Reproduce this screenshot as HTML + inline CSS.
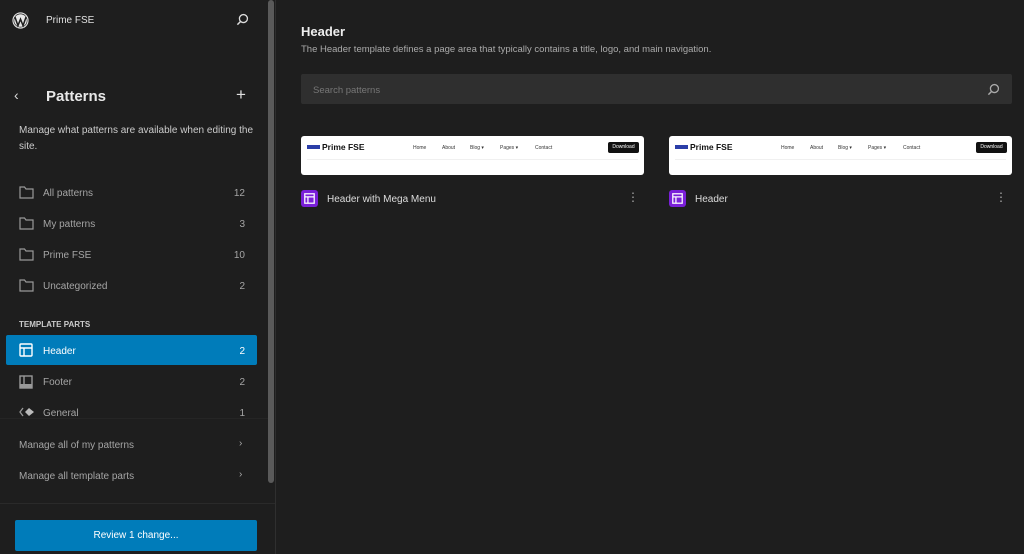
<!DOCTYPE html>
<html><head><meta charset="utf-8">
<style>
*{box-sizing:border-box;margin:0;padding:0}
body{width:1024px;height:554px;overflow:hidden;background:#1e1e1e;font-family:"Liberation Sans",sans-serif;color:#e0e0e0;position:relative}
.abs{position:absolute}
.side{left:0;top:0;width:268px;height:554px;background:#1e1e1e}
.scroll{left:268px;top:0;width:6px;height:483px;background:#5a5a5a;border-radius:3px}
.divider{left:275px;top:0;width:1px;height:554px;background:#2f2f2f}
.t{position:absolute;white-space:nowrap}
.item{position:absolute;left:6px;width:251px;height:30px;font-size:10px;color:#a5a5a5}
.item .lbl{position:absolute;left:37px;top:10px}
.item .cnt{position:absolute;right:12px;top:10px}
.item svg{position:absolute;left:13px;top:8px}
.card{position:absolute;top:136px;width:343px;height:39px;background:#fff;border-radius:3px}
.nav{position:absolute;top:9px;font-size:5px;color:#333}
</style></head><body>
<div class="abs side"></div>
<div class="abs scroll"></div>
<div class="abs divider"></div>

<svg class="abs" style="left:12px;top:12px" width="17" height="17" viewBox="0 0 20 20"><circle cx="10" cy="10" r="9.5" fill="#e8e8e8"/><circle cx="10" cy="10" r="8.2" fill="#1e1e1e"/><circle cx="10" cy="10" r="7.4" fill="#e8e8e8"/><path d="M3.5 6 L7 16 L10 8.5 L13 16 L16.5 6" stroke="#1e1e1e" stroke-width="1.8" fill="none"/></svg>
<div class="t" style="left:46px;top:15px;font-size:10px;color:#e0e0e0">Prime FSE</div>
<svg class="abs" style="left:236px;top:13px" width="13" height="13" viewBox="0 0 14 14"><circle cx="8" cy="6" r="4.3" stroke="#ddd" stroke-width="1.4" fill="none"/><path d="M5 9 L1.5 12.5" stroke="#ddd" stroke-width="1.6"/></svg>

<div class="t" style="left:14px;top:87px;font-size:14px;color:#ddd">‹</div>
<div class="t" style="left:46px;top:88px;font-size:15px;font-weight:bold;color:#e8e8e8">Patterns</div>
<div class="t" style="left:236px;top:85px;font-size:17px;color:#e0e0e0">+</div>
<div class="t" style="left:19px;top:123px;font-size:10px;line-height:15.5px;color:#ccc;white-space:normal;width:240px">Manage what patterns are available when editing the site.</div>

<div class="item" style="top:178px"><svg width="15" height="13" viewBox="0 0 15 13"><path d="M1 1h4.5l1.5 2h7v9h-13z" stroke="#999" stroke-width="1.2" fill="none"/></svg><span class="lbl">All patterns</span><span class="cnt">12</span></div>
<div class="item" style="top:209px"><svg width="15" height="13" viewBox="0 0 15 13"><path d="M1 1h4.5l1.5 2h7v9h-13z" stroke="#999" stroke-width="1.2" fill="none"/></svg><span class="lbl">My patterns</span><span class="cnt">3</span></div>
<div class="item" style="top:240px"><svg width="15" height="13" viewBox="0 0 15 13"><path d="M1 1h4.5l1.5 2h7v9h-13z" stroke="#999" stroke-width="1.2" fill="none"/></svg><span class="lbl">Prime FSE</span><span class="cnt">10</span></div>
<div class="item" style="top:271px"><svg width="15" height="13" viewBox="0 0 15 13"><path d="M1 1h4.5l1.5 2h7v9h-13z" stroke="#999" stroke-width="1.2" fill="none"/></svg><span class="lbl">Uncategorized</span><span class="cnt">2</span></div>

<div class="t" style="left:19px;top:320px;font-size:8px;font-weight:bold;color:#ccc">TEMPLATE PARTS</div>
<div class="item" style="top:335px;background:#007cba;color:#fff;border-radius:2px"><svg width="14" height="14" viewBox="0 0 14 14"><rect x="1" y="1" width="12" height="12" rx="1" stroke="#fff" stroke-width="1.4" fill="none"/><path d="M1 5h12M5 5v8" stroke="#fff" stroke-width="1.4"/></svg><span class="lbl" style="top:11px">Header</span><span class="cnt" style="top:11px">2</span></div>
<div class="item" style="top:367px"><svg width="14" height="14" viewBox="0 0 14 14"><rect x="1" y="1" width="12" height="12" stroke="#999" stroke-width="1.4" fill="none"/><rect x="1" y="9" width="12" height="4" fill="#999"/><path d="M5 1v8" stroke="#999" stroke-width="1.4"/></svg><span class="lbl">Footer</span><span class="cnt">2</span></div>
<div class="item" style="top:398px;height:20px;overflow:hidden"><svg width="16" height="12" viewBox="0 0 16 12"><path d="M4 2 L1 6 L4 10" stroke="#999" stroke-width="1.3" fill="none"/><path d="M6 6 L10 2 L15 6 L10 10z" fill="#bbb"/></svg><span class="lbl">General</span><span class="cnt">1</span></div>
<div class="abs" style="left:0;top:418px;width:268px;height:1px;background:#252525"></div>

<div class="t" style="left:19px;top:440px;font-size:10px;color:#a5a5a5">Manage all of my patterns</div>
<div class="t" style="left:239px;top:438px;font-size:10px;color:#aaa">›</div>
<div class="t" style="left:19px;top:471px;font-size:10px;color:#a5a5a5">Manage all template parts</div>
<div class="t" style="left:239px;top:469px;font-size:10px;color:#aaa">›</div>
<div class="abs" style="left:0;top:503px;width:275px;height:1px;background:#2a2a2a"></div>
<div class="abs" style="left:15px;top:520px;width:242px;height:31px;background:#007cba;border-radius:2px;color:#fff;font-size:10px;text-align:center;line-height:31px">Review 1 change...</div>

<div class="t" style="left:301px;top:24px;font-size:13px;font-weight:bold;color:#eee">Header</div>
<div class="t" style="left:301px;top:44px;font-size:9.5px;color:#aaa">The Header template defines a page area that typically contains a title, logo, and main navigation.</div>
<div class="abs" style="left:301px;top:74px;width:711px;height:30px;background:#2f2f2f;border-radius:2px"></div>
<div class="t" style="left:313px;top:85px;font-size:9.5px;color:#777">Search patterns</div>
<svg class="abs" style="left:987px;top:83px" width="13" height="13" viewBox="0 0 14 14"><circle cx="8" cy="6" r="4.3" stroke="#aaa" stroke-width="1.4" fill="none"/><path d="M5 9 L1.5 12.5" stroke="#aaa" stroke-width="1.6"/></svg>

<div class="card" style="left:301px">
 <div class="abs" style="left:6px;top:9px;width:13px;height:4px;background:#2b3ea8"></div>
 <div class="t" style="left:21px;top:6px;font-size:8.5px;font-weight:bold;color:#111">Prime FSE</div>
 <span class="nav" style="left:112px">Home</span><span class="nav" style="left:141px">About</span><span class="nav" style="left:169px">Blog ▾</span><span class="nav" style="left:199px">Pages ▾</span><span class="nav" style="left:234px">Contact</span>
 <div class="abs" style="left:307px;top:6px;width:31px;height:11px;background:#111;border-radius:2px;color:#fff;font-size:5px;line-height:11px;text-align:center">Download</div>
 <div class="abs" style="left:6px;top:23px;width:331px;height:1px;background:#f0f0f0"></div>
</div>
<div class="card" style="left:669px">
 <div class="abs" style="left:6px;top:9px;width:13px;height:4px;background:#2b3ea8"></div>
 <div class="t" style="left:21px;top:6px;font-size:8.5px;font-weight:bold;color:#111">Prime FSE</div>
 <span class="nav" style="left:112px">Home</span><span class="nav" style="left:141px">About</span><span class="nav" style="left:169px">Blog ▾</span><span class="nav" style="left:199px">Pages ▾</span><span class="nav" style="left:234px">Contact</span>
 <div class="abs" style="left:307px;top:6px;width:31px;height:11px;background:#111;border-radius:2px;color:#fff;font-size:5px;line-height:11px;text-align:center">Download</div>
 <div class="abs" style="left:6px;top:23px;width:331px;height:1px;background:#f0f0f0"></div>
</div>

<div class="abs" style="left:301px;top:190px;width:17px;height:17px;background:#7a1fd8;border-radius:3px"></div>
<svg class="abs" style="left:304px;top:193px" width="11" height="11" viewBox="0 0 14 14"><rect x="1" y="1" width="12" height="12" stroke="#fff" stroke-width="1.6" fill="none"/><path d="M1 5h12M5 5v8" stroke="#fff" stroke-width="1.6"/></svg>
<div class="t" style="left:327px;top:194px;font-size:10px;color:#ddd">Header with Mega Menu</div>
<div class="t" style="left:627px;top:194px;font-size:12px;color:#aaa;line-height:6px;width:6px">⋮</div>

<div class="abs" style="left:669px;top:190px;width:17px;height:17px;background:#7a1fd8;border-radius:3px"></div>
<svg class="abs" style="left:672px;top:193px" width="11" height="11" viewBox="0 0 14 14"><rect x="1" y="1" width="12" height="12" stroke="#fff" stroke-width="1.6" fill="none"/><path d="M1 5h12M5 5v8" stroke="#fff" stroke-width="1.6"/></svg>
<div class="t" style="left:695px;top:194px;font-size:10px;color:#ddd">Header</div>
<div class="t" style="left:995px;top:194px;font-size:12px;color:#aaa;line-height:6px;width:6px">⋮</div>
</body></html>
